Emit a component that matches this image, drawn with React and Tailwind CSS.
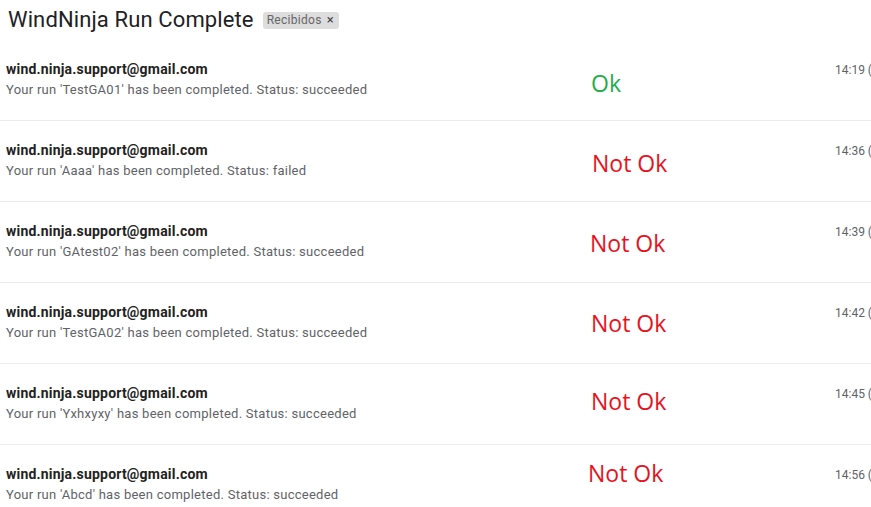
import React from "react";

const rows = [
  { name: "TestGA01", status: "succeeded", mark: "Ok", ok: true, time: "14:19", mx: 6, my: 27 },
  { name: "Aaaa", status: "failed", mark: "Not Ok", ok: false, time: "14:36", mx: 7, my: 26 },
  { name: "GAtest02", status: "succeeded", mark: "Not Ok", ok: false, time: "14:39", mx: 5, my: 25 },
  { name: "TestGA02", status: "succeeded", mark: "Not Ok", ok: false, time: "14:42", mx: 6, my: 24 },
  { name: "Yxhxyxy", status: "succeeded", mark: "Not Ok", ok: false, time: "14:45", mx: 6, my: 21 },
  { name: "Abcd", status: "succeeded", mark: "Not Ok", ok: false, time: "14:56", mx: 3, my: 12 },
];

function Row({ r }) {
  return (
    <div className="flex h-[81px] border-b border-[#ececec]">
      <div className="flex w-[835px] shrink-0">
        <div className="w-[585px] shrink-0 pl-[6px] pt-[19px]">
          <div className="text-[14px] font-bold leading-[20px] tracking-[0.2px] text-[#222]">wind.ninja.support@gmail.com</div>
          <div className="text-[13px] leading-[21px] tracking-[0.26px] text-[#5f6368]">
            Your run '{r.name}' has been completed. Status: {r.status}
          </div>
        </div>
        <div
          className={
            "whitespace-nowrap text-[23px] leading-[32px] " +
            (r.ok ? "text-[#1fae4b]" : "text-[#e8121e]")
          }
          style={{ marginLeft: r.mx, marginTop: r.my, fontFamily: '"Open Sans", sans-serif' }}
        >
          {r.mark}
        </div>
      </div>
      <div className="mt-[22px] whitespace-nowrap text-[12px] leading-[16px] text-[#5f6368]">
        {r.time} (hace 2 días)
      </div>
    </div>
  );
}

export default function App() {
  return (
    <div
      className="h-[507px] w-[871px] overflow-hidden bg-white"
      style={{ fontFamily: "Roboto, 'Liberation Sans', sans-serif" }}
    >
      <div className="flex h-[40px] items-center pl-[8px]">
        <div className="text-[22px] leading-[28px] tracking-[0.12px] text-[#202124]">WindNinja Run Complete</div>
        <div className="ml-[9px] flex h-[17px] items-center rounded-[3px] bg-[#dddddd] pl-[4px] pr-[5px] text-[12px] tracking-[0.3px] text-[#666]">
          Recibidos
          <span className="ml-[5px] text-[13px] text-[#444]">×</span>
        </div>
      </div>
      {rows.map((r, i) => (
        <Row key={i} r={r} />
      ))}
    </div>
  );
}
